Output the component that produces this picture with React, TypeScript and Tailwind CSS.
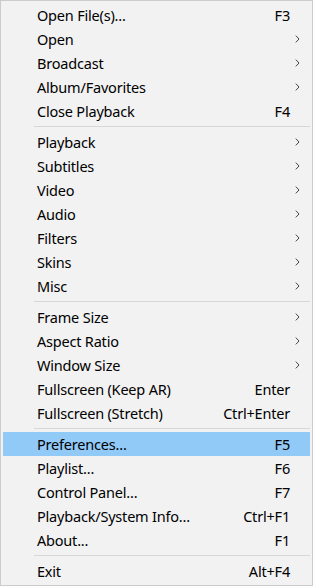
type Item = { label: string; shortcut?: string; sub?: boolean; active?: boolean } | "sep";

const items: Item[] = [
  { label: "Open File(s)...", shortcut: "F3" },
  { label: "Open", sub: true },
  { label: "Broadcast", sub: true },
  { label: "Album/Favorites", sub: true },
  { label: "Close Playback", shortcut: "F4" },
  "sep",
  { label: "Playback", sub: true },
  { label: "Subtitles", sub: true },
  { label: "Video", sub: true },
  { label: "Audio", sub: true },
  { label: "Filters", sub: true },
  { label: "Skins", sub: true },
  { label: "Misc", sub: true },
  "sep",
  { label: "Frame Size", sub: true },
  { label: "Aspect Ratio", sub: true },
  { label: "Window Size", sub: true },
  { label: "Fullscreen (Keep AR)", shortcut: "Enter" },
  { label: "Fullscreen (Stretch)", shortcut: "Ctrl+Enter" },
  "sep",
  { label: "Preferences...", shortcut: "F5", active: true },
  { label: "Playlist...", shortcut: "F6" },
  { label: "Control Panel...", shortcut: "F7" },
  { label: "Playback/System Info...", shortcut: "Ctrl+F1" },
  { label: "About...", shortcut: "F1" },
  "sep",
  { label: "Exit", shortcut: "Alt+F4" },
];

function Chevron() {
  return (
    <svg width="5" height="8" viewBox="0 0 5 8" className="text-[#444]">
      <path d="M0.8 0.6 L4 4 L0.8 7.4" fill="none" stroke="currentColor" strokeWidth="1" />
    </svg>
  );
}

export default function App() {
  return (
    <div
      className="flex h-[586px] w-[313px] flex-col border border-[#cccccc] bg-[#f2f2f2] px-[2px] py-[2px] text-[14.5px] tracking-[-0.2px] text-black"
      style={{ fontFamily: '"Noto Sans", "Open Sans", sans-serif' }}
    >
      {items.map((item, i) =>
        item === "sep" ? (
          <div key={i} className="my-[3px] ml-[31px] h-px bg-[#d7d7d7]" />
        ) : (
          <div
            key={i}
            className={`flex h-6 shrink-0 items-center pl-[34px] leading-none ${
              item.active ? "bg-[#91c9f7]" : ""
            }`}
          >
            <span className="flex-1 whitespace-nowrap">{item.label}</span>
            {item.shortcut && <span className="whitespace-nowrap">{item.shortcut}</span>}
            <span className="flex w-5 justify-end pr-[10px]">{item.sub && <Chevron />}</span>
          </div>
        )
      )}
    </div>
  );
}
